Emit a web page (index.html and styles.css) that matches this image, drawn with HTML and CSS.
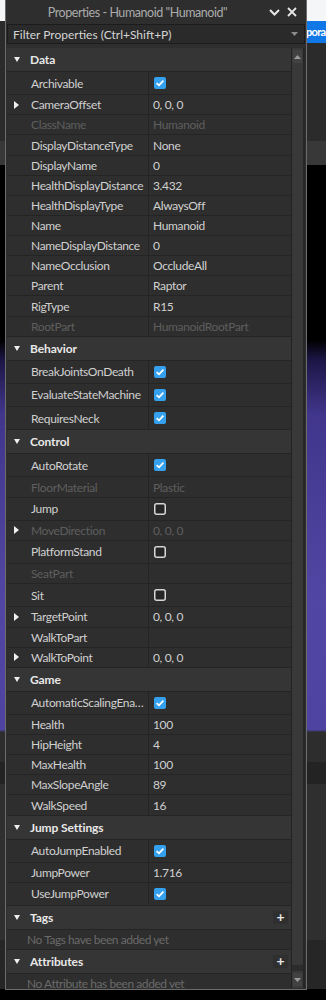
FILE: index.html
```html
<!DOCTYPE html>
<html lang="en">

<head>
  <meta charset="UTF-8" />
  <title>Properties</title>
  <link rel="stylesheet" href="styles.css">
</head>

<body>
  <div class="bg-button">pora</div>

  <div class="panel">
    <div class="titlebar">
      <div class="title">Properties - Humanoid "Humanoid"</div>
      <div class="tb-icons">
        <svg width="11" height="7" viewBox="0 0 11 7"><polyline points="1,1 5.5,5.5 10,1" fill="none" stroke="#e6e6e6" stroke-width="2"/></svg>
        <svg width="10" height="10" viewBox="0 0 10 10"><path d="M1 1L9 9M9 1L1 9" stroke="#e6e6e6" stroke-width="1.8"/></svg>
      </div>
    </div>

    <div class="filter">
      <span>Filter Properties (Ctrl+Shift+P)</span>
      <svg width="7" height="4" viewBox="0 0 7 4"><polygon points="0,0 7,0 3.5,4" fill="#8a8a8a"/></svg>
    </div>

    <div class="list-wrap">
      <div class="list">
        <div class="head">Data</div>
        <div class="row cb"><div class="name">Archivable</div><div class="val"><svg class="chk" width="12" height="12" viewBox="0 0 12 12"><rect width="12" height="12" rx="2" fill="#35a0ee"/><polyline points="2.6,6.1 5,8.4 9.4,3.6" fill="none" stroke="#fff" stroke-width="1.7"/></svg></div></div>
        <div class="row"><div class="name exp">CameraOffset</div><div class="val">0, 0, 0</div></div>
        <div class="row dis"><div class="name">ClassName</div><div class="val">Humanoid</div></div>
        <div class="row"><div class="name">DisplayDistanceType</div><div class="val">None</div></div>
        <div class="row"><div class="name">DisplayName</div><div class="val">0</div></div>
        <div class="row"><div class="name">HealthDisplayDistance</div><div class="val">3.432</div></div>
        <div class="row"><div class="name">HealthDisplayType</div><div class="val">AlwaysOff</div></div>
        <div class="row"><div class="name">Name</div><div class="val">Humanoid</div></div>
        <div class="row"><div class="name">NameDisplayDistance</div><div class="val">0</div></div>
        <div class="row"><div class="name">NameOcclusion</div><div class="val">OccludeAll</div></div>
        <div class="row"><div class="name">Parent</div><div class="val">Raptor</div></div>
        <div class="row"><div class="name">RigType</div><div class="val">R15</div></div>
        <div class="row dis"><div class="name">RootPart</div><div class="val">HumanoidRootPart</div></div>

        <div class="head">Behavior</div>
        <div class="row cb"><div class="name">BreakJointsOnDeath</div><div class="val"><svg class="chk" width="12" height="12" viewBox="0 0 12 12"><rect width="12" height="12" rx="2" fill="#35a0ee"/><polyline points="2.6,6.1 5,8.4 9.4,3.6" fill="none" stroke="#fff" stroke-width="1.7"/></svg></div></div>
        <div class="row cb"><div class="name">EvaluateStateMachine</div><div class="val"><svg class="chk" width="12" height="12" viewBox="0 0 12 12"><rect width="12" height="12" rx="2" fill="#35a0ee"/><polyline points="2.6,6.1 5,8.4 9.4,3.6" fill="none" stroke="#fff" stroke-width="1.7"/></svg></div></div>
        <div class="row cb"><div class="name">RequiresNeck</div><div class="val"><svg class="chk" width="12" height="12" viewBox="0 0 12 12"><rect width="12" height="12" rx="2" fill="#35a0ee"/><polyline points="2.6,6.1 5,8.4 9.4,3.6" fill="none" stroke="#fff" stroke-width="1.7"/></svg></div></div>

        <div class="head">Control</div>
        <div class="row cb"><div class="name">AutoRotate</div><div class="val"><svg class="chk" width="12" height="12" viewBox="0 0 12 12"><rect width="12" height="12" rx="2" fill="#35a0ee"/><polyline points="2.6,6.1 5,8.4 9.4,3.6" fill="none" stroke="#fff" stroke-width="1.7"/></svg></div></div>
        <div class="row dis"><div class="name">FloorMaterial</div><div class="val">Plastic</div></div>
        <div class="row cb"><div class="name">Jump</div><div class="val"><svg class="chk" width="12" height="12" viewBox="0 0 12 12"><rect x="0.75" y="0.75" width="10.5" height="10.5" rx="2" fill="#262626" stroke="#d6d6d6" stroke-width="1.5"/></svg></div></div>
        <div class="row dis"><div class="name exp">MoveDirection</div><div class="val">0, 0, 0</div></div>
        <div class="row cb"><div class="name">PlatformStand</div><div class="val"><svg class="chk" width="12" height="12" viewBox="0 0 12 12"><rect x="0.75" y="0.75" width="10.5" height="10.5" rx="2" fill="#262626" stroke="#d6d6d6" stroke-width="1.5"/></svg></div></div>
        <div class="row dis"><div class="name">SeatPart</div><div class="val"></div></div>
        <div class="row cb"><div class="name">Sit</div><div class="val"><svg class="chk" width="12" height="12" viewBox="0 0 12 12"><rect x="0.75" y="0.75" width="10.5" height="10.5" rx="2" fill="#262626" stroke="#d6d6d6" stroke-width="1.5"/></svg></div></div>
        <div class="row"><div class="name exp">TargetPoint</div><div class="val">0, 0, 0</div></div>
        <div class="row"><div class="name">WalkToPart</div><div class="val"></div></div>
        <div class="row"><div class="name exp">WalkToPoint</div><div class="val">0, 0, 0</div></div>

        <div class="head">Game</div>
        <div class="row cb"><div class="name"><span class="clip">AutomaticScalingEnabled</span></div><div class="val"><svg class="chk" width="12" height="12" viewBox="0 0 12 12"><rect width="12" height="12" rx="2" fill="#35a0ee"/><polyline points="2.6,6.1 5,8.4 9.4,3.6" fill="none" stroke="#fff" stroke-width="1.7"/></svg></div></div>
        <div class="row"><div class="name">Health</div><div class="val">100</div></div>
        <div class="row"><div class="name">HipHeight</div><div class="val">4</div></div>
        <div class="row"><div class="name">MaxHealth</div><div class="val">100</div></div>
        <div class="row"><div class="name">MaxSlopeAngle</div><div class="val">89</div></div>
        <div class="row"><div class="name">WalkSpeed</div><div class="val">16</div></div>

        <div class="head">Jump Settings</div>
        <div class="row cb"><div class="name">AutoJumpEnabled</div><div class="val"><svg class="chk" width="12" height="12" viewBox="0 0 12 12"><rect width="12" height="12" rx="2" fill="#35a0ee"/><polyline points="2.6,6.1 5,8.4 9.4,3.6" fill="none" stroke="#fff" stroke-width="1.7"/></svg></div></div>
        <div class="row"><div class="name">JumpPower</div><div class="val">1.716</div></div>
        <div class="row cb"><div class="name">UseJumpPower</div><div class="val"><svg class="chk" width="12" height="12" viewBox="0 0 12 12"><rect width="12" height="12" rx="2" fill="#35a0ee"/><polyline points="2.6,6.1 5,8.4 9.4,3.6" fill="none" stroke="#fff" stroke-width="1.7"/></svg></div></div>

        <div class="head">Tags<span class="add">+</span></div>
        <div class="empty">No Tags have been added yet</div>

        <div class="head">Attributes<span class="add">+</span></div>
        <div class="empty">No Attribute has been added yet</div>
      </div>

      <div class="scrollbar">
        <div class="sb-btn"><svg width="7" height="4" viewBox="0 0 7 4"><polygon points="0,4 7,4 3.5,0" fill="#9a9a9a"/></svg></div>
        <div class="sb-track"></div>
        <div class="sb-btn"><svg width="7" height="4" viewBox="0 0 7 4"><polygon points="0,0 7,0 3.5,4" fill="#9a9a9a"/></svg></div>
      </div>
    </div>
  </div>
</body>

</html>
```

FILE: styles.css
```css
body {
  margin: 0;
  width: 326px;
  height: 1000px;
  overflow: hidden;
  font-family: Lato, 'Noto Sans', sans-serif;
  font-size: 12px;
  letter-spacing: -0.35px;
  background: linear-gradient(to bottom,
      #f4f6f8 0 21px,
      #2b2b2b 21px 141px,
      #383838 141px 165px,
      #000 165px 340px,
      #1c1646 360px,
      #41368c 415px,
      #5246a4 600px,
      #4e43a0 730px,
      #2d2d2d 732px 762px,
      #232323 762px 784px,
      #2f2f2f 784px 940px,
      #262626 940px 989px,
      #000 989px);
}

.bg-button {
  position: absolute;
  top: 21px;
  left: 303px;
  width: 23px;
  height: 22px;
  padding-left: 3px;
  box-sizing: border-box;
  background: #0f78e6;
  color: #fff;
  font-weight: 700;
  font-size: 11px;
  letter-spacing: -0.7px;
  line-height: 22px;
  white-space: nowrap;
}

.panel {
  position: relative;
  margin-left: 5px;
  width: 302px;
  height: 990px;
  box-sizing: border-box;
  background: #2e2e2e;
  border: 1px solid #6c6c6c;
  border-top: none;
  display: flex;
  flex-direction: column;
}

.titlebar {
  height: 24px;
  flex: none;
  display: flex;
  align-items: center;
  padding: 0 9px 0 0;
}

.title {
  flex: 1;
  text-align: center;
  color: #ababab;
  font-size: 12.5px;
  letter-spacing: -0.45px;
}

.tb-icons {
  display: flex;
  align-items: center;
  gap: 7px;
}

.filter {
  height: 20px;
  flex: none;
  box-sizing: border-box;
  margin: 0 1px;
  padding: 0 6px 0 5px;
  border: 1px solid #1c1c1c;
  background: #2a2a2a;
  color: #d4d4d4;
  letter-spacing: 0;
  display: flex;
  align-items: center;
  justify-content: space-between;
}

.list-wrap {
  flex: 1;
  min-height: 0;
  margin: 4px 1px 1px;
  display: flex;
  overflow: hidden;
}

.list {
  width: 284px;
  flex: none;
}

.head {
  height: 24px;
  box-sizing: border-box;
  background: #353535;
  border-bottom: 1px solid #242424;
  color: #e8e8e8;
  font-weight: 700;
  letter-spacing: -0.1px;
  display: flex;
  align-items: center;
  padding-left: 24px;
}

.head::before {
  content: '';
  width: 0;
  height: 0;
  border-top: 5px solid #eeeeee;
  border-left: 3.5px solid transparent;
  border-right: 3.5px solid transparent;
  margin-left: -17px;
  margin-right: 10px;
}

.add {
  margin-left: auto;
  margin-right: 3px;
  width: 15px;
  height: 13px;
  background: #2f2f2f;
  color: #e8e8e8;
  font-size: 14px;
  line-height: 12px;
  text-align: center;
}

.row {
  height: 20.14px;
  box-sizing: border-box;
  border-bottom: 1px solid #242424;
  display: grid;
  grid-template-columns: 142px 1fr;
  color: #d0d0d0;
}

.row.cb {
  height: 23.2px;
}

.row.dis {
  color: #5e5e5e;
}

.name {
  border-right: 1px solid #242424;
  padding-left: 24px;
  padding-right: 3px;
  display: flex;
  align-items: center;
  white-space: nowrap;
  overflow: hidden;
}

.clip {
  overflow: hidden;
  text-overflow: ellipsis;
}

.name.exp::before {
  content: '';
  flex: none;
  width: 0;
  height: 0;
  border-left: 5px solid #f0f0f0;
  border-top: 4px solid transparent;
  border-bottom: 4px solid transparent;
  margin-left: -17px;
  margin-right: 12px;
}

.val {
  padding-left: 4px;
  display: flex;
  align-items: center;
  white-space: nowrap;
  overflow: hidden;
}

.chk {
  margin-left: 1px;
}

.empty {
  height: 20px;
  box-sizing: border-box;
  border-bottom: 1px solid #242424;
  padding-left: 20px;
  color: #6a6a6a;
  letter-spacing: -0.45px;
  display: flex;
  align-items: center;
}

.scrollbar {
  flex: 1;
  display: flex;
  flex-direction: column;
  border-left: 1px solid #222;
  border-right: 2px solid #262626;
  background: #393939;
}

.sb-btn {
  height: 13px;
  margin: 2px 1px;
  background: #424242;
  display: flex;
  align-items: center;
  justify-content: center;
}

.sb-track {
  flex: 1;
  border-bottom: 6px solid #2c2c2c;
}
```
